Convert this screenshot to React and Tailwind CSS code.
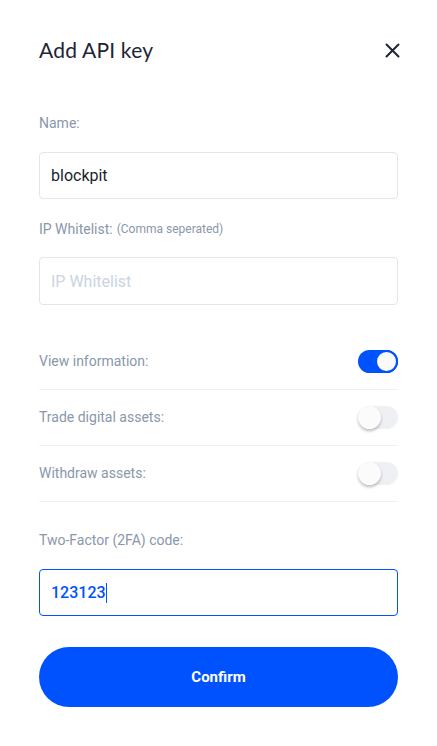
import React, { useState } from "react";

const Toggle = ({ on, onChange }) => (
  <button
    type="button"
    onClick={onChange}
    className={`relative w-[40px] h-[23px] rounded-full transition-colors ${on ? "bg-[#0052ff]" : "bg-[#eef0f4]"}`}
  >
    <span
      className={`absolute top-0 w-[23px] h-[23px] rounded-full bg-[#fbfbfc] ${
        on ? "right-0 border-2 border-[#0052ff]" : "left-0 shadow-[0_2px_3px_rgba(0,0,0,0.25)]"
      }`}
    />
  </button>
);

const Label = ({ children }) => (
  <div className="h-[20px] flex items-center text-[14px] text-[#8a97aa]">{children}</div>
);

export default function App() {
  const [perms, setPerms] = useState({ view: true, trade: false, withdraw: false });
  const toggle = (k) => setPerms((p) => ({ ...p, [k]: !p[k] }));

  const rows = [
    { key: "view", label: "View information:" },
    { key: "trade", label: "Trade digital assets:" },
    { key: "withdraw", label: "Withdraw assets:" },
  ];

  return (
    <div className="w-[437px] h-[746px] bg-white px-[39px] pt-[36px]" style={{ fontFamily: "Roboto, sans-serif" }}>
      {/* Header */}
      <div className="flex items-center justify-between h-[28px]">
        <h2 className="text-[21px] text-[#1e2533] tracking-[0.2px]" style={{ fontFamily: "Lato, sans-serif" }}>
          Add API key
        </h2>
        <button className="w-[20px] h-[20px] flex items-center justify-center -mr-[4px]" aria-label="Close">
          <svg width="15" height="15" viewBox="0 0 15 15" fill="none" stroke="#1e2533" strokeWidth="2" strokeLinecap="round">
            <path d="M1.5 1.5l12 12M13.5 1.5l-12 12" />
          </svg>
        </button>
      </div>

      {/* Name */}
      <div className="mt-[49px]">
        <Label>Name:</Label>
      </div>
      <input
        defaultValue="blockpit"
        className="mt-[19px] w-full h-[47px] border border-[#e2e6ec] rounded-[4px] px-[11px] text-[16px] text-[#1a1f2b] outline-none"
      />

      {/* IP whitelist */}
      <div className="mt-[20px]">
        <Label>
          IP Whitelist:<span className="ml-[4px] text-[12px]">(Comma seperated)</span>
        </Label>
      </div>
      <input
        placeholder="IP Whitelist"
        className="mt-[18px] w-full h-[48px] border border-[#e2e6ec] rounded-[4px] px-[11px] text-[16px] placeholder:text-[#cbd4e0] outline-none"
      />

      {/* Permissions */}
      <div className="mt-[29px]">
        {rows.map((r) => (
          <div key={r.key} className="flex items-center justify-between h-[56px] border-b border-[#eef0f4]">
            <span className="text-[14px] text-[#8a97aa]">{r.label}</span>
            <Toggle on={perms[r.key]} onChange={() => toggle(r.key)} />
          </div>
        ))}
      </div>

      {/* 2FA */}
      <div className="mt-[28px]">
        <Label>Two-Factor (2FA) code:</Label>
      </div>
      <div className="mt-[19px] w-full h-[47px] border border-[#0052ff] rounded-[4px] px-[11px] flex items-center">
        <span className="text-[16px] font-medium text-[#0052ff]">123123</span>
        <span className="w-[1px] h-[20px] bg-[#0052ff]" />
      </div>

      <button className="mt-[31px] w-full h-[60px] rounded-full bg-[#0052ff] text-white text-[15px] font-bold">
        Confirm
      </button>
    </div>
  );
}
